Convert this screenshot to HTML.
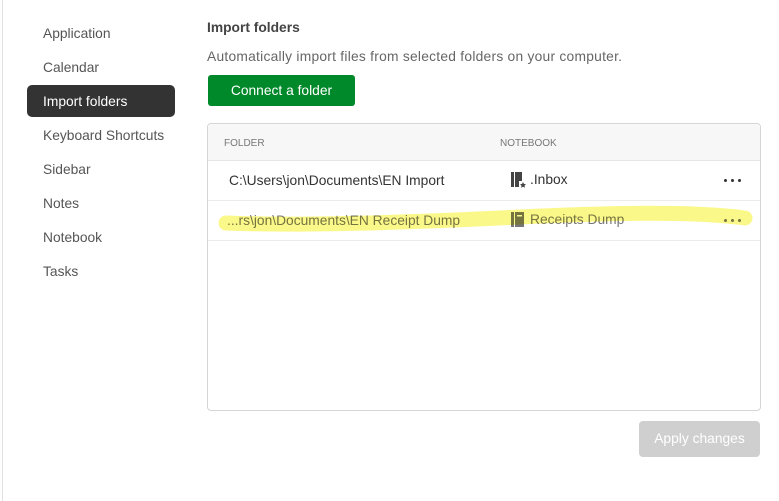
<!DOCTYPE html>
<html><head><style>
body{margin:0;width:779px;height:501px;background:#fff;font-family:"Liberation Sans",sans-serif;position:relative;overflow:hidden;color:#333}
.lb{position:absolute;left:2px;top:0;width:1px;height:501px;background:#e2e2e2}
.nav{position:absolute;left:43px;font-size:13.8px;color:#555}
.sel{position:absolute;left:27px;top:85px;width:148px;height:32px;background:#333;border-radius:5px}
.a{position:absolute}
.dots{position:absolute;left:516px;top:18px;width:18px;height:4px}
.dots i{position:absolute;top:0;width:3px;height:3px;border-radius:50%;background:#333}
</style></head><body>
<div class="lb"></div>
<div class="sel"></div>
<div class="nav" style="top:26px">Application</div>
<div class="nav" style="top:60px">Calendar</div>
<div class="nav" style="top:94px;color:#fff">Import folders</div>
<div class="nav" style="top:128px">Keyboard Shortcuts</div>
<div class="nav" style="top:162px">Sidebar</div>
<div class="nav" style="top:196px">Notes</div>
<div class="nav" style="top:230px">Notebook</div>
<div class="nav" style="top:264px">Tasks</div>
<div class="a" style="left:207px;top:20px;font-size:13.8px;font-weight:bold;color:#444">Import folders</div>
<div class="a" style="left:207px;top:49px;font-size:13.8px;color:#666;letter-spacing:0.25px">Automatically import files from selected folders on your computer.</div>
<div class="a" style="left:208px;top:75px;width:147px;height:31px;background:#00892a;border-radius:3px;color:#fff;font-size:13.8px;line-height:31px;text-align:center">Connect a folder</div>
<div class="a" style="left:207px;top:123px;width:552px;height:286px;border:1px solid #d6d6d6;border-radius:4px;overflow:hidden">
<div style="height:36px;background:#f7f7f7;border-bottom:1px solid #e6e6e6;font-size:10px;color:#777;position:relative">
<span style="position:absolute;left:16px;top:14px">FOLDER</span><span style="position:absolute;left:292px;top:14px">NOTEBOOK</span></div>
<div style="height:39px;border-bottom:1px solid #ececec;position:relative;font-size:13.8px">
<span style="position:absolute;left:21px;top:12px">C:\Users\jon\Documents\EN Import</span>
<svg style="position:absolute;left:303px;top:10px" width="16" height="18"><rect x="0" y="1" width="3" height="15" fill="#444"/><path d="M4 1h7v9h-3v6h-4z" fill="#444"/><path d="M12 11l1 2 2 .3-1.5 1.4.4 2-1.9-1-1.9 1 .4-2-1.5-1.4 2-.3z" fill="#444"/></svg>
<span style="position:absolute;left:322px;top:11px">.Inbox</span>
<div class="dots"><i style="left:0"></i><i style="left:7px"></i><i style="left:14px"></i></div></div>
<div style="height:39px;border-bottom:1px solid #ececec;position:relative;font-size:13.8px;color:#777">
<span style="position:absolute;left:19px;top:12px">...rs\jon\Documents\EN Receipt Dump</span>
<svg style="position:absolute;left:303px;top:10px" width="14" height="18"><rect x="0" y="1" width="3" height="15" fill="#777"/><rect x="4" y="1" width="9" height="15" fill="#777"/><rect x="6" y="4" width="5" height="1.5" fill="#fff"/></svg>
<span style="position:absolute;left:322px;top:11px">Receipts Dump</span>
<div class="dots"><i style="left:0;background:#777"></i><i style="left:7px;background:#777"></i><i style="left:14px;background:#777"></i></div></div>
</div>
<svg class="a" style="left:0;top:0;mix-blend-mode:multiply" width="779" height="501"><path d="M226 223 C300 226 420 222 520 217 C620 212 700 212 745 218" stroke="#fbf88a" stroke-width="15" fill="none" stroke-linecap="round"/></svg>
<div class="a" style="left:639px;top:421px;width:121px;height:36px;background:#cfcfcf;border-radius:4px;color:#fff;font-size:13.8px;line-height:36px;text-align:center">Apply changes</div>
</body></html>
